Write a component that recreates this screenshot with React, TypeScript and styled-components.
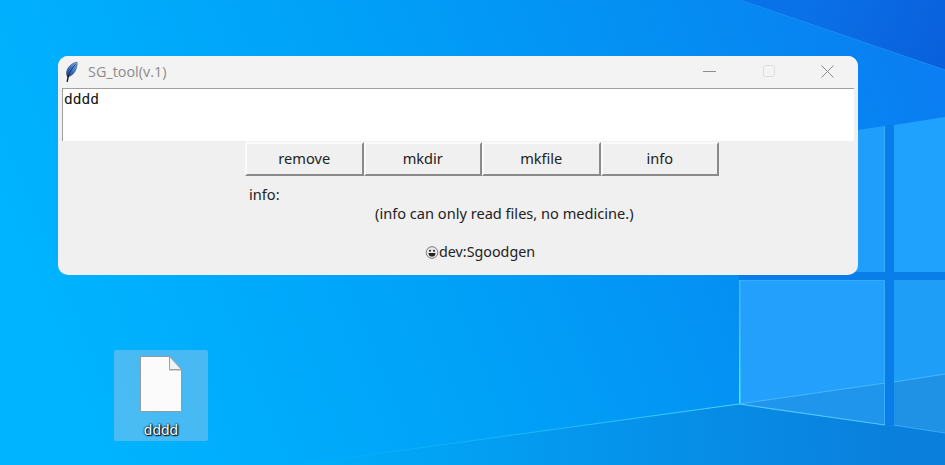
import React from 'react';
import styled, { createGlobalStyle } from 'styled-components';

const GlobalStyle = createGlobalStyle`
  html, body {
    margin: 0;
    padding: 0;
    overflow: hidden;
  }
`;

const Desktop = styled.div`
  position: relative;
  width: 945px;
  height: 465px;
  overflow: hidden;
  background: #0a8ef0;
  font-family: 'Noto Sans', 'Open Sans', sans-serif;
`;

const WallpaperSvg = styled.svg`
  position: absolute;
  left: 0;
  top: 0;
`;

const Window = styled.div`
  position: absolute;
  left: 58px;
  top: 56px;
  width: 800px;
  height: 219px;
  display: flex;
  flex-direction: column;
  background: #f0f0f0;
  border-radius: 10px;
  overflow: hidden;
`;

const TitleBar = styled.div`
  height: 32px;
  flex: none;
  box-sizing: border-box;
  display: flex;
  align-items: center;
  background: #f3f3f3;
  padding: 0 0 1px 7px;
`;

const TitleText = styled.span`
  margin-left: 9px;
  font-family: 'Open Sans', sans-serif;
  font-size: 14.4px;
  color: #8c8c8c;
`;

const Controls = styled.div`
  margin-left: auto;
  display: flex;
  align-items: center;
  gap: 46px;
  padding-right: 24px;
`;

const InputArea = styled.div`
  flex: none;
  height: 53px;
  margin: 0 4px;
  box-sizing: border-box;
  background: #fff;
  border-top: 1px solid #a0a0a0;
  border-left: 1px solid #a0a0a0;
  padding: 1px 0 0 1px;
  font-family: 'DejaVu Sans Mono', monospace;
  font-size: 14.6px;
  line-height: 17px;
  color: #111;
`;

const Content = styled.div`
  width: 474px;
  margin-left: 187px;
  display: flex;
  flex-direction: column;
  color: #222;
  font-size: 14.6px;
  line-height: 19px;
`;

const ButtonRow = styled.div`
  display: flex;
  margin-top: 1px;
`;

const ToolButton = styled.button`
  flex: 1;
  height: 34px;
  box-sizing: border-box;
  padding: 0 0 1px;
  background: #f0f0f0;
  border: 2px solid;
  border-color: #fafafa #8a8a8a #8a8a8a #fafafa;
  font: inherit;
  color: #222;
`;

const InfoLabel = styled.div`
  margin-top: 9px;
  padding-left: 4px;
`;

const Hint = styled.div`
  padding-left: 130px;
`;

const Credit = styled.div`
  margin-top: 19px;
  padding-left: 180px;
  display: flex;
  align-items: center;
  font-size: 14.3px;
`;

const DesktopIcon = styled.div`
  position: absolute;
  left: 114px;
  top: 350px;
  width: 94px;
  height: 91px;
  box-sizing: border-box;
  padding-top: 6px;
  display: flex;
  flex-direction: column;
  align-items: center;
  background: rgba(160, 200, 230, 0.45);
  border-radius: 2px;
`;

const IconLabel = styled.span`
  margin-top: 7px;
  font-size: 14px;
  line-height: 20px;
  color: #fff;
  text-shadow: 1px 1px 1px #012, 0 0 2px #000, 1px 0 2px #024;
`;

const Wallpaper = () => (
  <WallpaperSvg width="945" height="465" viewBox="0 0 945 465">
    <defs>
      <linearGradient id="base" x1="0" y1="0.45" x2="1" y2="0.25">
        <stop offset="0" stopColor="#00b4ff" />
        <stop offset="0.4" stopColor="#00a2f8" />
        <stop offset="0.78" stopColor="#058cf2" />
        <stop offset="1" stopColor="#0a7ef2" />
      </linearGradient>
      <linearGradient id="floor" gradientUnits="userSpaceOnUse" x1="300" y1="465" x2="900" y2="430">
        <stop offset="0" stopColor="#00aefb" />
        <stop offset="0.5" stopColor="#0595ec" />
        <stop offset="1" stopColor="#0a7fdc" />
      </linearGradient>
      <linearGradient id="corner" gradientUnits="userSpaceOnUse" x1="800" y1="0" x2="945" y2="60">
        <stop offset="0" stopColor="#0a72e8" />
        <stop offset="1" stopColor="#0a60dc" />
      </linearGradient>
      <linearGradient id="ray" gradientUnits="userSpaceOnUse" x1="295" y1="465" x2="739" y2="404">
        <stop offset="0" stopColor="#20c8ff" stopOpacity="0" />
        <stop offset="1" stopColor="#50e0ff" stopOpacity="0.9" />
      </linearGradient>
      <linearGradient id="edge" x1="0" y1="1" x2="0" y2="0">
        <stop offset="0" stopColor="#50f0ff" />
        <stop offset="1" stopColor="#50c8ff" stopOpacity="0.5" />
      </linearGradient>
    </defs>
    <rect width="945" height="465" fill="url(#base)" />
    <polygon points="295,465 739,404 885,425 945,433 945,465" fill="url(#floor)" />
    <polygon points="740,0 945,0 945,70" fill="url(#corner)" />
    <line x1="740" y1="0" x2="945" y2="70" stroke="#1a8cf4" strokeWidth="1" />
    <line x1="295" y1="465" x2="739" y2="404" stroke="url(#ray)" strokeWidth="1" />

    <polygon points="885,126 894,125 894,425 885,425" fill="#0a7ee8" />
    <rect x="739" y="272" width="206" height="8" fill="#0a7ee8" />

    <polygon points="850,131 885,126 885,272 850,272" fill="#1f9efc" />
    <polygon points="894,125 945,117 945,272 894,272" fill="#1fa2fd" />
    <polygon points="739,280 885,280 885,425 739,404" fill="#22a0fc" />
    <polygon points="739,404 885,383 885,425" fill="#1f95ec" />
    <polygon points="894,280 945,280 945,433 894,425" fill="#1f9ef8" />
    <polygon points="894,382 945,374 945,433 894,425" fill="#1f92e6" />

    <line x1="884.500" y1="126" x2="884.500" y2="272" stroke="#36aeff" strokeWidth="1" />
    <line x1="884.500" y1="280" x2="884.500" y2="425" stroke="#36aeff" strokeWidth="1" />
    <line x1="739" y1="280.500" x2="885" y2="280.500" stroke="#34acff" strokeWidth="1" />
    <rect x="739" y="280" width="1.500" height="124" fill="url(#edge)" />
    <line x1="739" y1="404" x2="885" y2="425" stroke="#50c8ff" strokeWidth="1.200" />
    <line x1="739" y1="404" x2="885" y2="383" stroke="#46b8ff" strokeWidth="1" />
    <line x1="894" y1="382" x2="945" y2="374" stroke="#44b8ff" strokeWidth="1" />
    <line x1="894" y1="425" x2="945" y2="433" stroke="#3aa8f4" strokeWidth="1" />
  </WallpaperSvg>
);

const Feather = () => (
  <svg width="14" height="22" viewBox="0 0 14 22">
    <defs>
      <linearGradient id="plume" x1="1" y1="0" x2="0" y2="1">
        <stop offset="0" stopColor="#8ab2e0" />
        <stop offset="0.5" stopColor="#3a78c8" />
        <stop offset="1" stopColor="#1c3c70" />
      </linearGradient>
    </defs>
    <path d="M12 1.200C8.500 1.500 3.600 4.500 2 9.500 1.300 12 1.500 14.200 2.600 16 6.500 15 9.800 12 11 8 11.900 5.400 12.500 3 12 1.200Z" fill="url(#plume)" stroke="#24406e" strokeWidth="0.600" />
    <path d="M10.500 3.400C7.800 6.200 5 10.200 3.400 15" stroke="#102a52" strokeWidth="0.900" fill="none" />
    <path d="M3.400 14.500 2.200 20.800" stroke="#1a1a1a" strokeWidth="1.400" fill="none" />
  </svg>
);

const WindowControls = () => (
  <Controls>
    <svg width="13" height="13" viewBox="0 0 13 13">
      <path d="M0 6.500H13" stroke="#8e8e8e" strokeWidth="1" />
    </svg>
    <svg width="13" height="13" viewBox="0 0 13 13">
      <rect x="1.500" y="0.500" width="11" height="11" rx="2" fill="none" stroke="#dcdcdc" strokeWidth="1" />
    </svg>
    <svg width="13" height="13" viewBox="0 0 13 13">
      <path d="M0.500 0.500 12.500 12.500M12.500 0.500 0.500 12.500" stroke="#8a8a8a" strokeWidth="1" />
    </svg>
  </Controls>
);

const Smiley = () => (
  <svg width="14" height="15" viewBox="0 0 14 15">
    <circle cx="7" cy="8.500" r="5.800" fill="#e8e8e8" stroke="#777" strokeWidth="1" />
    <circle cx="5" cy="6.800" r="1" fill="#222" />
    <circle cx="9" cy="6.800" r="1" fill="#222" />
    <path d="M3.500 9h7c0 2.400-1.500 3.600-3.500 3.600S3.500 11.400 3.500 9Z" fill="#222" />
  </svg>
);

const FileIcon = () => (
  <svg width="43" height="57" viewBox="0 0 43 57">
    <path d="M0.500 0.500H29.500L41.500 13.500V55.500H0.500Z" fill="#fbfbfb" stroke="#8f9aa3" strokeWidth="1" />
    <path d="M29.500 0.500V13.500H41.500Z" fill="#f0f2f4" stroke="#9aa2a8" strokeWidth="1" />
    <path d="M29 14.500H41" stroke="#d0d3d6" strokeWidth="1" />
  </svg>
);

const App = () => {
  return (
    <Desktop>
      <GlobalStyle />
      <Wallpaper />
      <Window>
        <TitleBar>
          <Feather />
          <TitleText>SG_tool(v.1)</TitleText>
          <WindowControls />
        </TitleBar>
        <InputArea>dddd</InputArea>
        <Content>
          <ButtonRow>
            <ToolButton>remove</ToolButton>
            <ToolButton>mkdir</ToolButton>
            <ToolButton>mkfile</ToolButton>
            <ToolButton>info</ToolButton>
          </ButtonRow>
          <InfoLabel>info:</InfoLabel>
          <Hint>(info can only read files, no medicine.)</Hint>
          <Credit>
            <Smiley />
            dev:Sgoodgen
          </Credit>
        </Content>
      </Window>
      <DesktopIcon>
        <FileIcon />
        <IconLabel>dddd</IconLabel>
      </DesktopIcon>
    </Desktop>
  );
};

export default App;
